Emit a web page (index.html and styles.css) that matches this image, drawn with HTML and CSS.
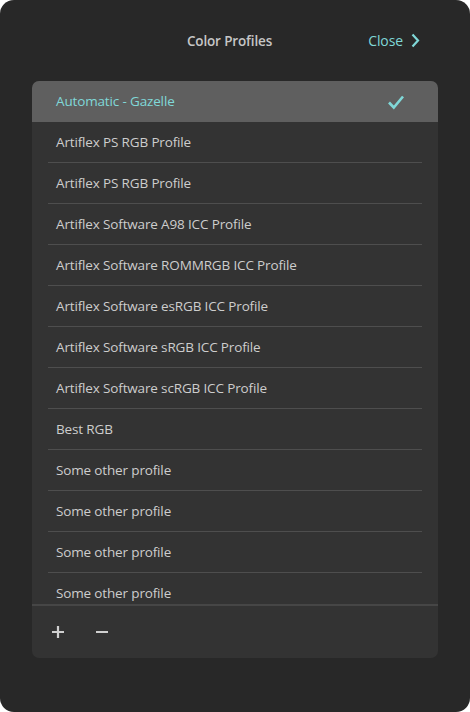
FILE: index.html
```html
<!DOCTYPE html>
<html lang="en">
<head>
<meta charset="utf-8">
<title>Color Profiles</title>
<link rel="stylesheet" href="styles.css">
</head>
<body>
<div class="window">
  <header class="header">
    <span class="spacer"></span>
    <h1 class="title">Color Profiles</h1>
    <a class="close" href="#">Close
      <svg class="chev" width="9" height="15" viewBox="0 0 9 15"><path d="M1.5 1.5 L7 7.5 L1.5 13.5" fill="none" stroke="currentColor" stroke-width="2.2" stroke-linejoin="miter"/></svg>
    </a>
  </header>
  <section class="panel">
    <ul class="list">
      <li class="row selected"><span>Automatic - Gazelle</span>
        <svg class="check" width="18" height="16" viewBox="0 0 18 16"><path d="M2 8.5 L6.8 13.5 L16 2.5" fill="none" stroke="currentColor" stroke-width="2.6"/></svg>
      </li>
      <li class="row">Artiflex PS RGB Profile</li>
      <li class="row">Artiflex PS RGB Profile</li>
      <li class="row">Artiflex Software A98 ICC Profile</li>
      <li class="row">Artiflex Software ROMMRGB ICC Profile</li>
      <li class="row">Artiflex Software esRGB ICC Profile</li>
      <li class="row">Artiflex Software sRGB ICC Profile</li>
      <li class="row">Artiflex Software scRGB ICC Profile</li>
      <li class="row">Best RGB</li>
      <li class="row">Some other profile</li>
      <li class="row">Some other profile</li>
      <li class="row">Some other profile</li>
      <li class="row">Some other profile</li>
      <li class="row">Some other profile</li>
    </ul>
    <footer class="footer">
      <button class="tool" aria-label="Add">
        <svg width="14" height="14" viewBox="0 0 14 14"><path d="M7 1 V13 M1 7 H13" stroke="currentColor" stroke-width="2.2"/></svg>
      </button>
      <button class="tool" aria-label="Remove">
        <svg width="14" height="14" viewBox="0 0 14 14"><path d="M1 7 H13" stroke="currentColor" stroke-width="2.2"/></svg>
      </button>
    </footer>
  </section>
</div>
</body>
</html>
```

FILE: styles.css
```css
html, body {
  margin: 0;
  padding: 0;
  background: #ffffff;
}
body {
  font-family: "Open Sans", "Noto Sans", sans-serif;
  -webkit-font-smoothing: antialiased;
}
.window {
  width: 470px;
  height: 712px;
  box-sizing: border-box;
  background: #282828;
  border-radius: 14px;
  padding: 0 32px;
  display: flex;
  flex-direction: column;
}
.header {
  height: 81px;
  display: grid;
  grid-template-columns: 1fr auto 1fr;
  align-items: center;
  padding-right: 18px;
  padding-left: 7px;
}
.title {
  margin: 0;
  font-size: 13.5px;
  font-weight: 600;
  letter-spacing: -0.15px;
  color: #c6c6c6;
}
.close {
  justify-self: end;
  display: flex;
  align-items: center;
  gap: 8px;
  color: #7fd7d7;
  text-decoration: none;
  font-size: 14px;
  letter-spacing: -0.1px;
}
.chev { display: block; }
.panel {
  background: #333333;
  border-radius: 7px;
  display: flex;
  flex-direction: column;
  height: 577px;
  overflow: hidden;
}
.list {
  list-style: none;
  margin: 0;
  padding: 0;
  height: 523px;
  overflow: hidden;
  flex: none;
}
.row {
  height: 41px;
  box-sizing: border-box;
  margin: 0 16px;
  padding: 0 8px;
  border-bottom: 1px solid #4e4e4e;
  display: flex;
  align-items: center;
  font-size: 13.5px;
  letter-spacing: -0.15px;
  color: #cdcdcd;
}
.row.selected {
  height: 41px;
  margin: 0;
  padding: 0 33px 2px 24px;
  border-bottom: none;
  background: #5f5f5f;
  color: #80d8d8;
  justify-content: space-between;
}
.check { display: block; margin-top: 2px; }
.footer {
  border-top: 2px solid #464646;
  flex: 1;
  display: flex;
  align-items: center;
  gap: 30px;
  padding: 0 0 0 19px;
}
.tool {
  background: none;
  border: 0;
  padding: 0;
  color: #d0d0d0;
  display: flex;
}
```
